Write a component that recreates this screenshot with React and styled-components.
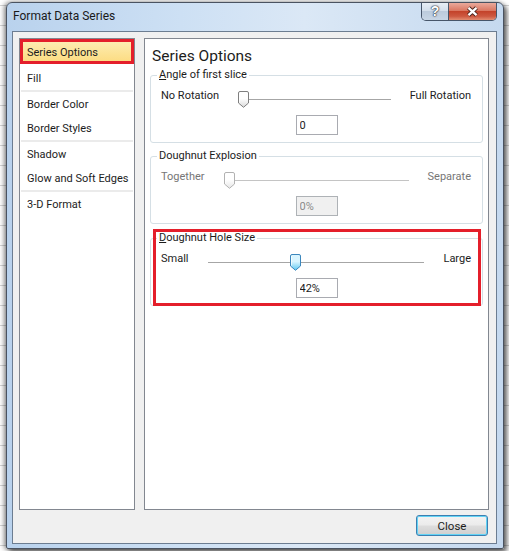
import React from 'react';
import styled, { createGlobalStyle, css } from 'styled-components';

const GlobalStyle = createGlobalStyle`
  html, body {
    margin: 0;
    padding: 0;
  }
  body {
    font-family: "Segoe UI", Roboto, "Liberation Sans", sans-serif;
    font-size: 11px;
    color: #1c1c1c;
  }
`;

// spreadsheet grid peeking out behind the dialog
const Desktop = styled.div`
  min-height: 551px;
  box-sizing: border-box;
  padding: 2px 0 0 6px;
  background-color: #fff;
  background-image: linear-gradient(to bottom, transparent 19px, #d4d4d4 19px);
  background-size: 100% 20px;
  background-position: 0 6px;
`;

const Window = styled.div`
  width: 498px;
  box-sizing: border-box;
  padding: 0 6px 4px 5px;
  border: 1px solid #4a5361;
  border-radius: 6px 6px 2px 2px;
  background: linear-gradient(90deg, #b9d2ed 0%, #cde0f4 35%, #dbe8f6 60%, #c5d9ef 100%);
  box-shadow: 3px 3px 5px rgba(0, 0, 0, 0.6), -2px 0 5px rgba(0, 0, 0, 0.45);
`;

const TitleBar = styled.div`
  height: 28px;
  display: flex;
  align-items: flex-start;
`;

const Caption = styled.span`
  padding: 5px 0 0 1px;
  font-size: 12px;
  line-height: 16px;
  color: #1a1a1a;
`;

const CaptionButtons = styled.div`
  margin-left: auto;
  display: flex;
  height: 17px;
  border: 1px solid rgba(38, 52, 72, 0.8);
  border-top: none;
  border-radius: 0 0 5px 5px;
  overflow: hidden;
`;

const HelpButton = styled.div`
  width: 26px;
  border-right: 1px solid rgba(38, 52, 72, 0.8);
  background: linear-gradient(#e8eef5 0%, #d4dfeb 45%, #bccbdc 50%, #c8d6e5 100%);
  display: flex;
  align-items: center;
  justify-content: center;
  font-family: "Liberation Sans", sans-serif;
  font-weight: bold;
  font-size: 14px;
  line-height: 17px;
  color: #fff;
  text-shadow: 0 0 1px #2b3340, 0 0 1px #2b3340, 0 0 2px #2b3340;
`;

const DismissButton = styled.div`
  width: 47px;
  background: linear-gradient(#eaa99b 0%, #da7862 45%, #c4432b 50%, #cd5840 78%, #e28d72 100%);
  display: flex;
  align-items: center;
  justify-content: center;
`;

const Client = styled.div`
  display: flex;
  flex-direction: column;
  padding: 6px 7px 7px 6px;
  border: 1px solid #6c7d91;
  background: #f0f0f0;
`;

const Panels = styled.div`
  display: flex;
  gap: 9px;
  height: 472px;
`;

const NavList = styled.ul`
  width: 116px;
  box-sizing: border-box;
  margin: 0;
  padding: 0;
  list-style: none;
  background: #fff;
  border: 1px solid #828790;
`;

const NavItem = styled.li`
  height: 24px;
  line-height: 26px;
  padding-left: 7px;
  white-space: nowrap;
  ${p => p.$active && css`
    height: 25px;
    line-height: 27px;
    margin-bottom: 2px;
    background: linear-gradient(#fdefb8, #fcda7c);
    box-shadow: inset 0 0 0 3px #e41f2b;
  `}
`;

const NavSeparator = styled.li`
  height: 2px;
  margin: 0 1px;
  background: #ebebeb;
`;

const OptionsPane = styled.div`
  flex: 1;
  display: flex;
  flex-direction: column;
  gap: 6px;
  padding: 6px 5px 0;
  background: #fff;
  border: 1px solid #828790;
`;

const PaneTitle = styled.h2`
  margin: 1px 0 -5px 2px;
  font-size: 15.5px;
  font-weight: normal;
  line-height: 21px;
`;

const Callout = styled.div`
  position: relative;
  margin-top: 1px;
  &::after {
    content: '';
    position: absolute;
    top: -2px;
    left: 3px;
    right: 2px;
    bottom: 0;
    border: 3px solid #e41f2b;
    pointer-events: none;
  }
`;

const Group = styled.fieldset`
  margin: 0;
  padding: 0 0 7px;
  min-inline-size: 0;
  border: 1px solid #d5dfe5;
  border-radius: 3px;
`;

const Legend = styled.legend`
  margin-left: 6px;
  padding: 0 2px;
  line-height: 14px;
`;

const SliderRow = styled.div`
  display: flex;
  align-items: flex-start;
  gap: 19px;
  margin-top: 7px;
  padding: 0 11px 0 10px;
`;

const EndLabel = styled.span`
  line-height: 14px;
  white-space: nowrap;
  color: ${p => (p.$muted ? '#767676' : 'inherit')};
`;

const Track = styled.div`
  flex: 1;
  height: 17px;
  margin-top: 2px;
  background: linear-gradient(${p => (p.$muted ? '#c4c4c4' : '#a6a6a6')}, ${p => (p.$muted ? '#c4c4c4' : '#a6a6a6')}) 0 8px / 100% 1px no-repeat;
  & > svg {
    display: block;
  }
`;

const ValueBox = styled.input`
  display: block;
  box-sizing: border-box;
  width: 42px;
  height: 20px;
  margin: 7px auto 0;
  padding: 0 0 0 3px;
  border: 1px solid #a9abb1;
  background: #fff;
  font: inherit;
  color: inherit;
  outline: none;
  &:disabled {
    background: #f0f0f0;
    border-color: #aeb2b6;
    color: #8a8a8a;
    -webkit-text-fill-color: #8a8a8a;
  }
`;

const Footer = styled.div`
  display: flex;
  justify-content: flex-end;
  margin-top: 5px;
  padding-right: 1px;
`;

const PushButton = styled.button`
  width: 72px;
  height: 21px;
  padding: 0;
  border: 1px solid #3c7fb1;
  border-radius: 3px;
  box-shadow: inset 0 0 0 1px #62d3f5;
  background: linear-gradient(#f3f3f3 0%, #ebebeb 48%, #dddddd 52%, #cfcfcf 100%);
  font: inherit;
  font-size: 11.5px;
  color: inherit;
`;

const thumbColors = {
  normal: { stroke: '#7f7f7f', top: '#ffffff', bottom: '#d9d9d9' },
  muted: { stroke: '#b2b2b2', top: '#ffffff', bottom: '#e6e6e6' },
  focus: { stroke: '#3c87bd', top: '#d9f5ff', bottom: '#5cc8f2' },
};

function Thumb({ tone, value }) {
  const c = thumbColors[tone];
  const id = `thumb-${tone}`;
  return (
    <svg
      width="11"
      height="17"
      viewBox="0 0 11 17"
      style={{ marginLeft: `calc((100% - 11px) * ${value / 100})` }}
    >
      <defs>
        <linearGradient id={id} x1="0" y1="0" x2="0" y2="1">
          <stop offset="0" stopColor={c.top} />
          <stop offset="0.45" stopColor={c.top} />
          <stop offset="1" stopColor={c.bottom} />
        </linearGradient>
      </defs>
      <path
        d="M0.5 2 Q0.5 0.5 2 0.5 H9 Q10.5 0.5 10.5 2 V12 L5.5 16.3 L0.5 12 Z"
        fill={`url(#${id})`}
        stroke={c.stroke}
      />
      <path d="M1.5 2 V11.5" stroke="#fff" strokeOpacity="0.7" />
    </svg>
  );
}

const groups = [
  { title: 'Angle of first slice', key: 'A', rest: 'ngle of first slice', min: 'No Rotation', max: 'Full Rotation', value: 0, text: '0', tone: 'normal' },
  { title: 'Doughnut Explosion', rest: 'Doughnut Explosion', min: 'Together', max: 'Separate', value: 0, text: '0%', tone: 'muted', disabled: true },
  { title: 'Doughnut Hole Size', key: 'D', rest: 'oughnut Hole Size', min: 'Small', max: 'Large', value: 40, text: '42%', tone: 'focus', marked: true },
];

function SliderGroup({ g }) {
  const box = (
    <Group>
      <Legend>
        {g.key && <u>{g.key}</u>}
        {g.rest}
      </Legend>
      <SliderRow>
        <EndLabel $muted={g.disabled}>{g.min}</EndLabel>
        <Track $muted={g.disabled}>
          <Thumb tone={g.tone} value={g.value} />
        </Track>
        <EndLabel $muted={g.disabled}>{g.max}</EndLabel>
      </SliderRow>
      <ValueBox readOnly value={g.text} disabled={g.disabled} />
    </Group>
  );
  return g.marked ? <Callout>{box}</Callout> : box;
}

const navGroups = [
  ['Series Options', 'Fill'],
  ['Border Color', 'Border Styles'],
  ['Shadow', 'Glow and Soft Edges'],
  ['3-D Format'],
];

export default function App() {
  return (
    <>
      <GlobalStyle />
      <Desktop>
        <Window>
          <TitleBar>
            <Caption>Format Data Series</Caption>
            <CaptionButtons>
              <HelpButton>?</HelpButton>
              <DismissButton>
                <svg width="13" height="11" viewBox="0 0 13 11">
                  <path d="M2.5 1.8 L10.5 9.2 M10.5 1.8 L2.5 9.2" stroke="#4b231b" strokeWidth="4.2" />
                  <path d="M2.5 1.8 L10.5 9.2 M10.5 1.8 L2.5 9.2" stroke="#fff" strokeWidth="2.3" />
                </svg>
              </DismissButton>
            </CaptionButtons>
          </TitleBar>
          <Client>
            <Panels>
              <NavList>
                {navGroups.map((items, gi) => (
                  <React.Fragment key={gi}>
                    {gi > 0 && <NavSeparator />}
                    {items.map(label => (
                      <NavItem key={label} $active={label === 'Series Options'}>
                        {label}
                      </NavItem>
                    ))}
                  </React.Fragment>
                ))}
              </NavList>
              <OptionsPane>
                <PaneTitle>Series Options</PaneTitle>
                {groups.map(g => (
                  <SliderGroup key={g.title} g={g} />
                ))}
              </OptionsPane>
            </Panels>
            <Footer>
              <PushButton>Close</PushButton>
            </Footer>
          </Client>
        </Window>
      </Desktop>
    </>
  );
}
